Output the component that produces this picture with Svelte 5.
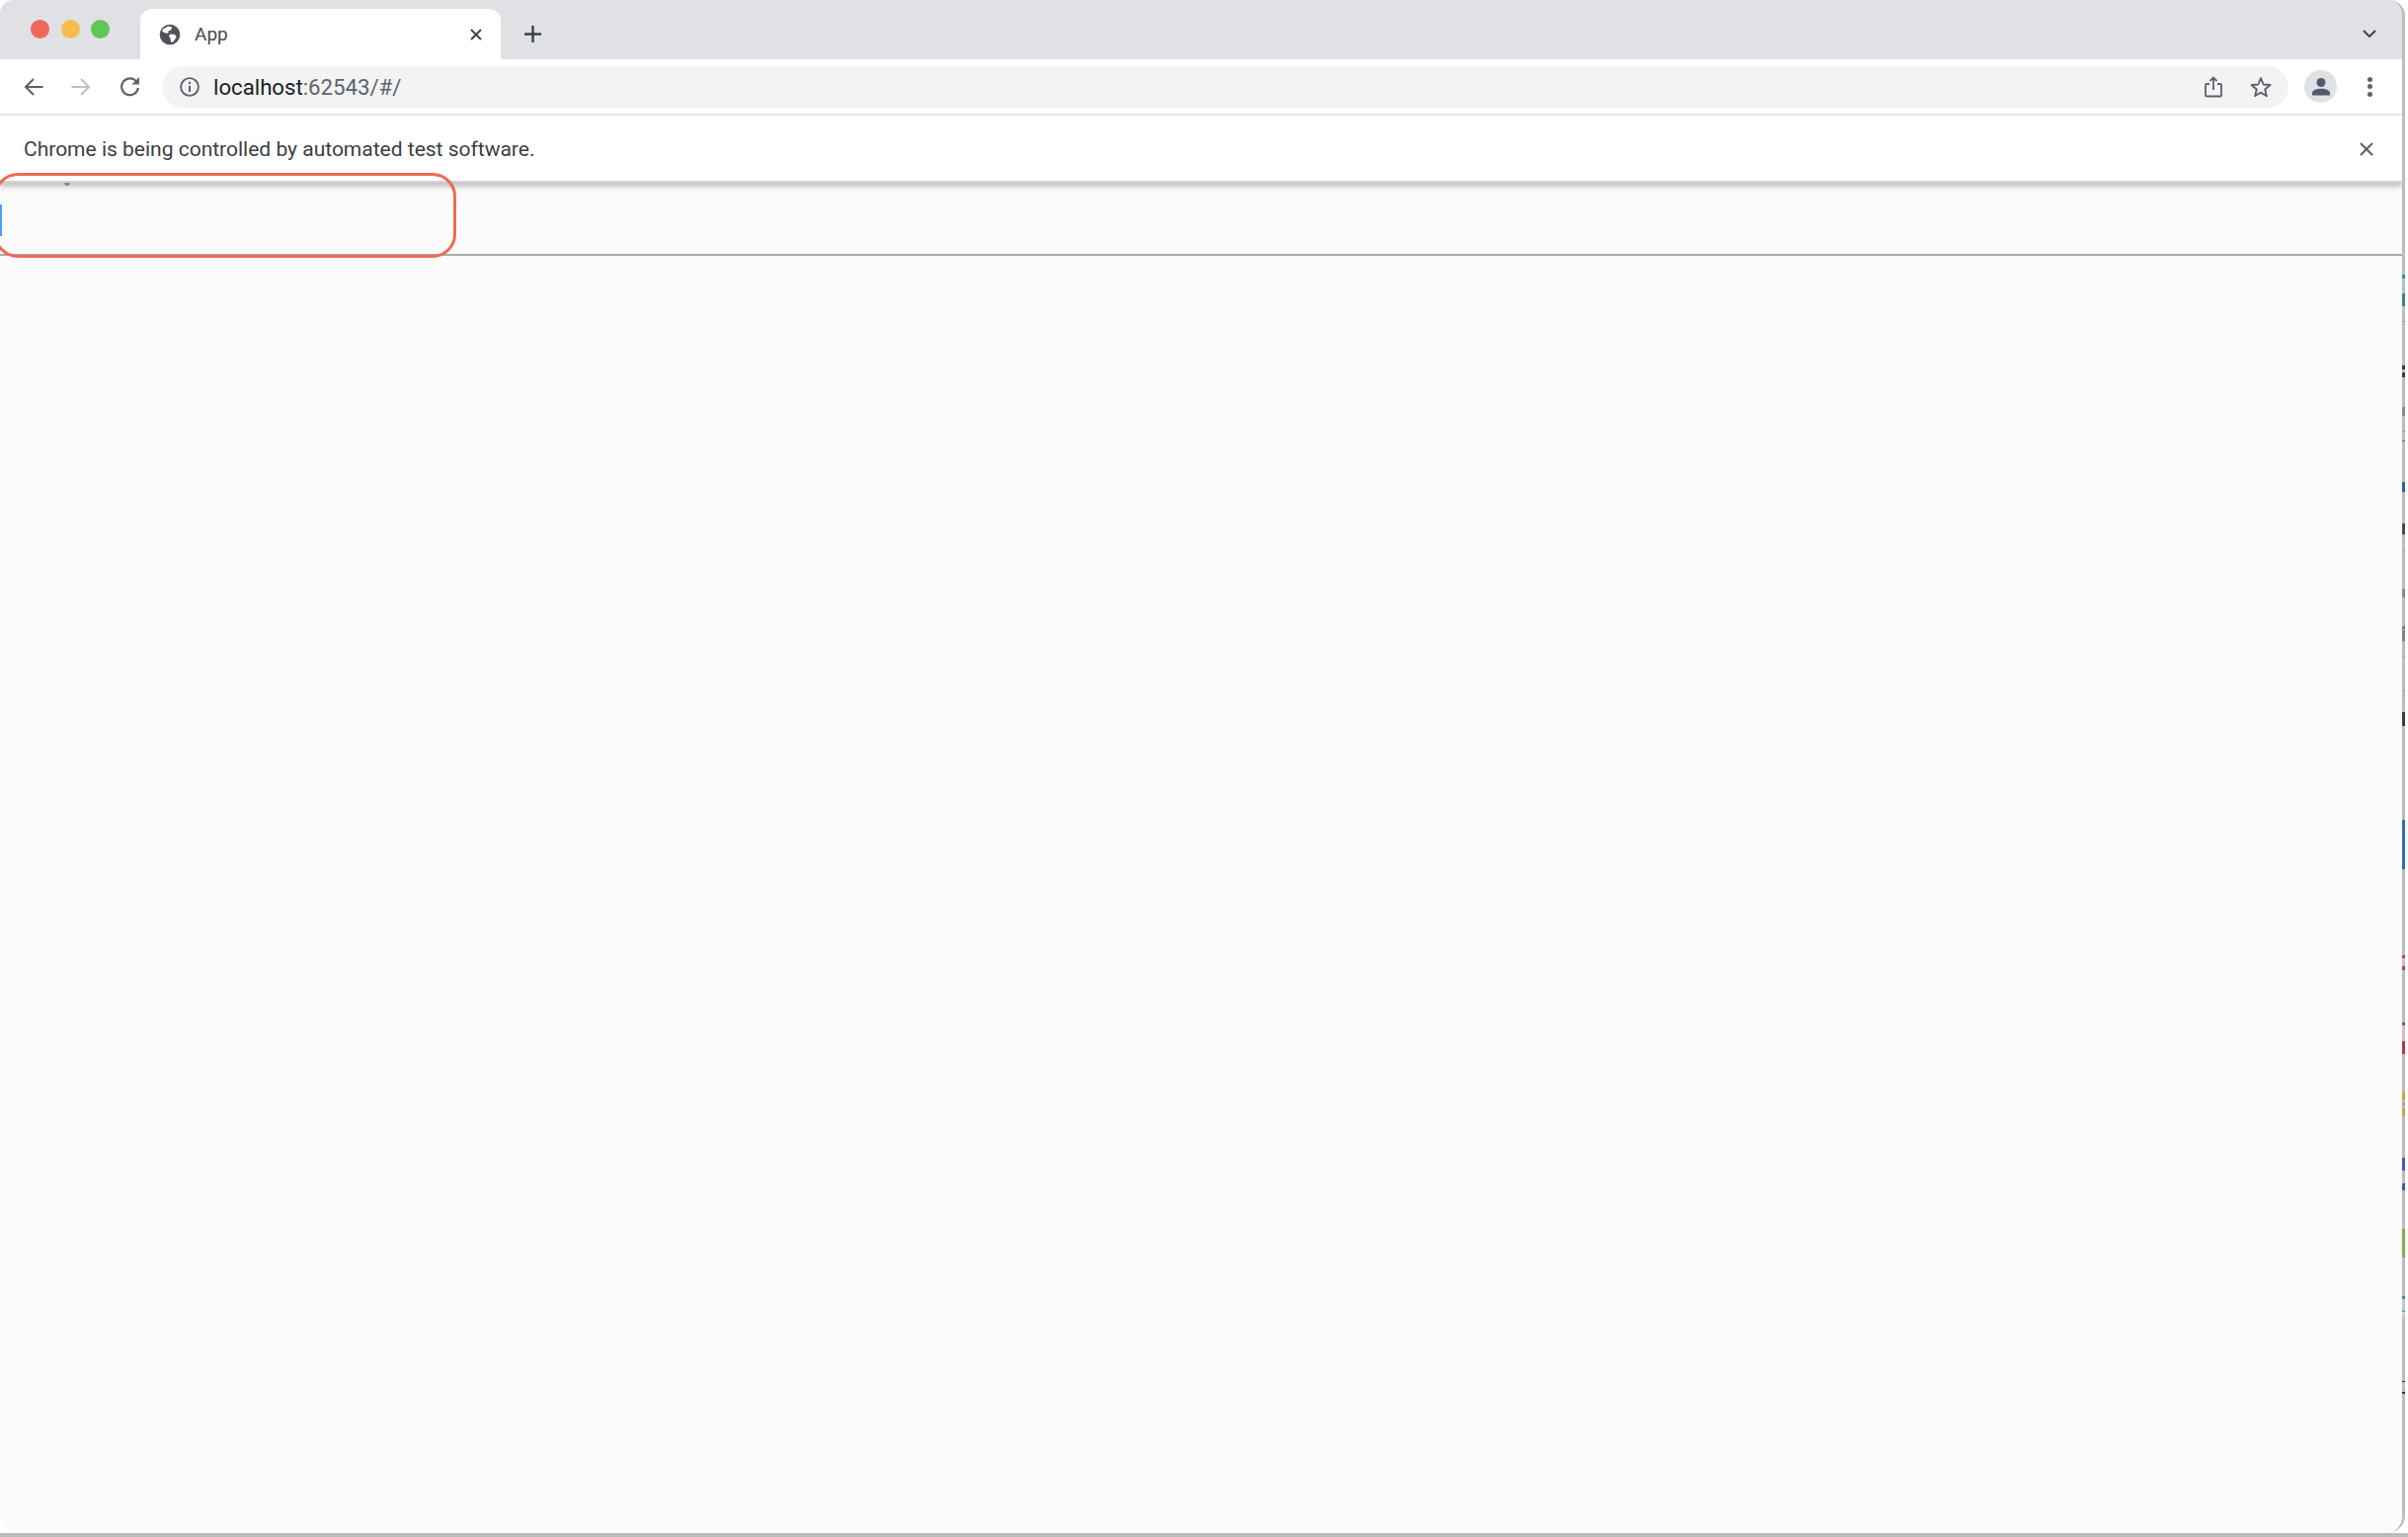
<script>
  const stripes = [
    { y: 278, h: 4, c: '#3f8f8f' }, { y: 282, h: 15, c: '#a9c4c4' }, { y: 297, h: 13, c: '#3f8585' }, { y: 325, h: 1, c: '#999' },
    { y: 370, h: 4, c: '#3c3c3c' }, { y: 377, h: 5, c: '#3c3c3c' }, { y: 412, h: 9, c: '#888' }, { y: 436, h: 1, c: '#999' },
    { y: 446, h: 1, c: '#666' }, { y: 488, h: 10, c: '#2f5fa8' }, { y: 530, h: 11, c: '#4a4a4a' }, { y: 557, h: 1, c: '#a5a5a5' },
    { y: 596, h: 9, c: '#8c8c8c' }, { y: 620, h: 1, c: '#a5a5a5' }, { y: 634, h: 3, c: '#777' }, { y: 638, h: 11, c: '#808080' },
    { y: 664, h: 1, c: '#a5a5a5' }, { y: 699, h: 1, c: '#a5a5a5' }, { y: 703, h: 1, c: '#a5a5a5' }, { y: 721, h: 14, c: '#3c3c3c' },
    { y: 830, h: 50, c: '#2a6cc4' }, { y: 967, h: 3, c: '#b5407c' }, { y: 970, h: 8, c: '#dcb6cb' }, { y: 978, h: 4, c: '#b5407c' },
    { y: 1035, h: 3, c: '#b0464f' }, { y: 1038, h: 16, c: '#d9bcbe' }, { y: 1054, h: 13, c: '#b33a44' }, { y: 1105, h: 8, c: '#c9a63c' },
    { y: 1116, h: 3, c: '#c9a63c' }, { y: 1122, h: 8, c: '#c9a63c' }, { y: 1172, h: 13, c: '#4a55c4' }, { y: 1198, h: 7, c: '#4a55c4' },
    { y: 1244, h: 29, c: '#7fae44' }, { y: 1312, h: 3, c: '#3f8f8f' }, { y: 1315, h: 12, c: '#b4cccc' }, { y: 1327, h: 1, c: '#3f8f8f' },
    { y: 1328, h: 6, c: '#c4d2d2' }, { y: 1398, h: 1, c: '#333' }, { y: 1409, h: 2, c: '#333' }
  ];
</script>

<div class="page">
  <div class="window">
    <header class="tabstrip">
      <div class="lights">
        <span class="light red"></span>
        <span class="light yellow"></span>
        <span class="light green"></span>
      </div>
      <div class="tab">
        <svg class="globe" viewBox="0 0 20 20" width="22" height="22">
          <circle cx="10" cy="10" r="9.4" fill="#50535a" />
          <path d="M3.600 5 L8.400 2.300 L12 3.200 L11 6 L8.800 6.600 L8.400 8.800 L5.400 8.400 L2.800 7 Z" fill="#fff" />
          <path d="M10.600 9.600 L14.600 10 L16 12.200 L13.200 16.600 L11 17 L10.400 13.200 L9 11.400 Z" fill="#fff" />
        </svg>
        <span class="tab-title">App</span>
        <svg class="tab-close" viewBox="0 0 12 12" width="12" height="12">
          <path d="M1 1 L11 11 M11 1 L1 11" stroke="#3c4043" stroke-width="1.8" fill="none" />
        </svg>
      </div>
      <svg class="new-tab" viewBox="0 0 17 17" width="17" height="17">
        <path d="M8.500 0 V17 M0 8.500 H17" stroke="#3c4043" stroke-width="2.400" fill="none" />
      </svg>
      <svg class="tab-menu" viewBox="0 0 14 9" width="14" height="9">
        <path d="M1 1 L7 7 L13 1" stroke="#3c4043" stroke-width="1.900" fill="none" />
      </svg>
    </header>

    <div class="toolbar">
      <svg class="nav back" viewBox="0 0 20 20" width="20" height="20">
        <path d="M19.500 10 H2.500 M10 2 L2 10 L10 18" stroke="#5f6368" stroke-width="2.100" fill="none" />
      </svg>
      <svg class="nav forward" viewBox="0 0 20 20" width="20" height="20">
        <path d="M0.500 10 H17.500 M10 2 L18 10 L10 18" stroke="#bdc1c6" stroke-width="2.100" fill="none" />
      </svg>
      <svg class="nav reload" viewBox="0 0 21 21" width="21" height="21">
        <path d="M17.500 6 A8.400 8.400 0 1 0 18.900 12" stroke="#5f6368" stroke-width="2.200" fill="none" />
        <path d="M20 1 V8.600 H12.400 Z" fill="#5f6368" />
      </svg>
      <div class="omnibox">
        <svg class="info" viewBox="0 0 20 20" width="20" height="20">
          <circle cx="10" cy="10" r="8.900" stroke="#5f6368" stroke-width="1.900" fill="none" />
          <path d="M10 8.800 V15" stroke="#5f6368" stroke-width="2" />
          <circle cx="10" cy="6" r="1.200" fill="#5f6368" />
        </svg>
        <span class="url"><span class="host">localhost</span>:62543/#/</span>
        <svg class="share" viewBox="0 0 18 22" width="18" height="22">
          <path d="M5 8 H2 Q1 8 1 9 V19.500 Q1 20.500 2 20.500 H16 Q17 20.500 17 19.500 V9 Q17 8 16 8 H13" stroke="#5f6368" stroke-width="1.800" fill="none" />
          <path d="M9 14 V2 M5.500 5 L9 1.500 L12.500 5" stroke="#5f6368" stroke-width="1.800" fill="none" />
        </svg>
        <svg class="star" viewBox="0 0 22 22" width="22" height="22">
          <path d="M11 2 L13.600 8.500 L20.500 9 L15.200 13.500 L16.900 20.300 L11 16.600 L5.100 20.300 L6.800 13.500 L1.500 9 L8.400 8.500 Z" stroke="#5f6368" stroke-width="1.900" fill="none" stroke-linejoin="round" />
        </svg>
      </div>
      <div class="avatar">
        <svg viewBox="0 0 20 20" width="20" height="20">
          <circle cx="10" cy="5.500" r="4.500" fill="#525a6b" />
          <path d="M1 18.500 V16.500 C1 13 6 11.800 10 11.800 C14 11.800 19 13 19 16.500 V18.500 Z" fill="#525a6b" />
        </svg>
      </div>
      <div class="kebab"><i></i><i></i><i></i></div>
    </div>

    <div class="infobar">
      <span class="info-text">Chrome is being controlled by automated test software.</span>
      <svg class="info-close" viewBox="0 0 14 14" width="14" height="14">
        <path d="M1 1 L13 13 M13 1 L1 13" stroke="#5f6368" stroke-width="2.200" fill="none" />
      </svg>
    </div>

    <main class="content">
      <div class="appbar"><span class="tick"></span></div>
    </main>

    <div class="annotation"></div>
    <span class="caret"></span>
  </div>
  <div class="floor"></div>
  {#each stripes as s}
    <span class="stripe" style="top:{s.y}px;height:{s.h}px;background:{s.c}"></span>
  {/each}
</div>

<style>
  :global(body) {
    margin: 0;
    background: #ffffff;
    font-family: "Liberation Sans", Arial, sans-serif;
  }

  .page {
    position: relative;
    width: 2438px;
    height: 1556px;
    display: flex;
    flex-direction: column;
    overflow: hidden;
    background: #ffffff;
  }

  .window {
    position: relative;
    width: 2435px;
    height: 1552px;
    box-sizing: border-box;
    flex: none;
    display: flex;
    flex-direction: column;
    border-right: 3px solid #bcbcbc;
    border-radius: 14px 16px 18px 18px;
    overflow: hidden;
    background: #fafafa;
  }

  .floor {
    height: 4px;
    flex: none;
    background: #bcbabd;
  }

  .tabstrip {
    height: 60px;
    flex: none;
    display: flex;
    align-items: flex-end;
    background: #dfe1e5;
  }

  .lights {
    display: flex;
    gap: 11.500px;
    align-self: flex-start;
    margin: 19.500px 0 0 31px;
    width: 111px;
  }

  .light {
    width: 19px;
    height: 19px;
    border-radius: 50%;
  }

  .red { background: #f0675c; }
  .yellow { background: #f6bc4f; }
  .green { background: #60c654; }

  .tab {
    width: 365px;
    height: 51px;
    display: flex;
    align-items: center;
    box-sizing: border-box;
    padding: 0 19px;
    background: #ffffff;
    border-radius: 12px 12px 0 0;
  }

  .globe {
    flex: none;
  }

  .tab-title {
    margin-left: 14px;
    font-family: Roboto, "Liberation Sans", sans-serif;
    font-size: 19px;
    color: #45484d;
  }

  .tab-close {
    margin-left: auto;
  }

  .new-tab {
    margin: 0 0 17px 24px;
  }

  .tab-menu {
    margin: 0 26px 21px auto;
  }

  .toolbar {
    height: 55px;
    flex: none;
    display: flex;
    align-items: center;
    background: #ffffff;
  }

  .nav {
    flex: none;
  }

  .back { margin-left: 24px; }
  .forward { margin-left: 28px; }
  .reload { margin-left: 28.500px; }

  .omnibox {
    width: 2153px;
    height: 42px;
    margin-left: 22.500px;
    flex: none;
    display: flex;
    align-items: center;
    box-sizing: border-box;
    padding: 0 17px 0 18px;
    background: #f1f3f4;
    border-radius: 21px;
  }

  .info {
    flex: none;
  }

  .url {
    margin-left: 14px;
    font-family: Roboto, "Liberation Sans", sans-serif;
    font-size: 22.200px;
    color: #5f6368;
  }

  .host {
    color: #202124;
  }

  .share {
    margin-left: auto;
  }

  .star {
    margin-left: 28px;
  }

  .avatar {
    width: 33px;
    height: 33px;
    margin-left: 16px;
    flex: none;
    border-radius: 50%;
    background: #dfe1e5;
    display: flex;
    align-items: center;
    justify-content: center;
  }

  .kebab {
    margin-left: 30.500px;
    display: flex;
    flex-direction: column;
    gap: 2.500px;
  }

  .kebab i {
    display: block;
    width: 5px;
    height: 5px;
    border-radius: 50%;
    background: #5f6368;
  }

  .infobar {
    height: 70px;
    flex: none;
    box-sizing: border-box;
    display: flex;
    align-items: center;
    padding: 1px 29px 0 24px;
    background: #ffffff;
    border-top: 2px solid #e8e8e8;
    border-bottom: 2px solid #d4d4d4;
    box-shadow: 0 4px 5px rgba(0, 0, 0, 0.22);
    position: relative;
    z-index: 1;
  }

  .info-text {
    font-family: Roboto, "Liberation Sans", sans-serif;
    font-size: 21px;
    color: #3c4043;
  }

  .info-close {
    margin-left: auto;
  }

  .content {
    flex: 1;
    background: #fafafa;
  }

  .appbar {
    height: 74px;
    box-sizing: border-box;
    position: relative;
    border-bottom: 2px solid #a9a9a9;
  }

  .tick {
    position: absolute;
    left: 65px;
    top: 0;
    width: 6px;
    height: 3px;
    background: #8a8a8a;
    border-radius: 0 0 3px 3px;
    z-index: 2;
  }

  .annotation {
    position: absolute;
    left: -6px;
    top: 175px;
    width: 462px;
    height: 80px;
    border: 3.500px solid #ee6a56;
    border-radius: 24px;
    z-index: 2;
  }

  .caret {
    position: absolute;
    left: 0;
    top: 207px;
    width: 2px;
    height: 32px;
    background: #4a9ff5;
    z-index: 2;
  }

  .stripe {
    position: absolute;
    left: 2432px;
    width: 3px;
    z-index: 3;
  }
</style>
